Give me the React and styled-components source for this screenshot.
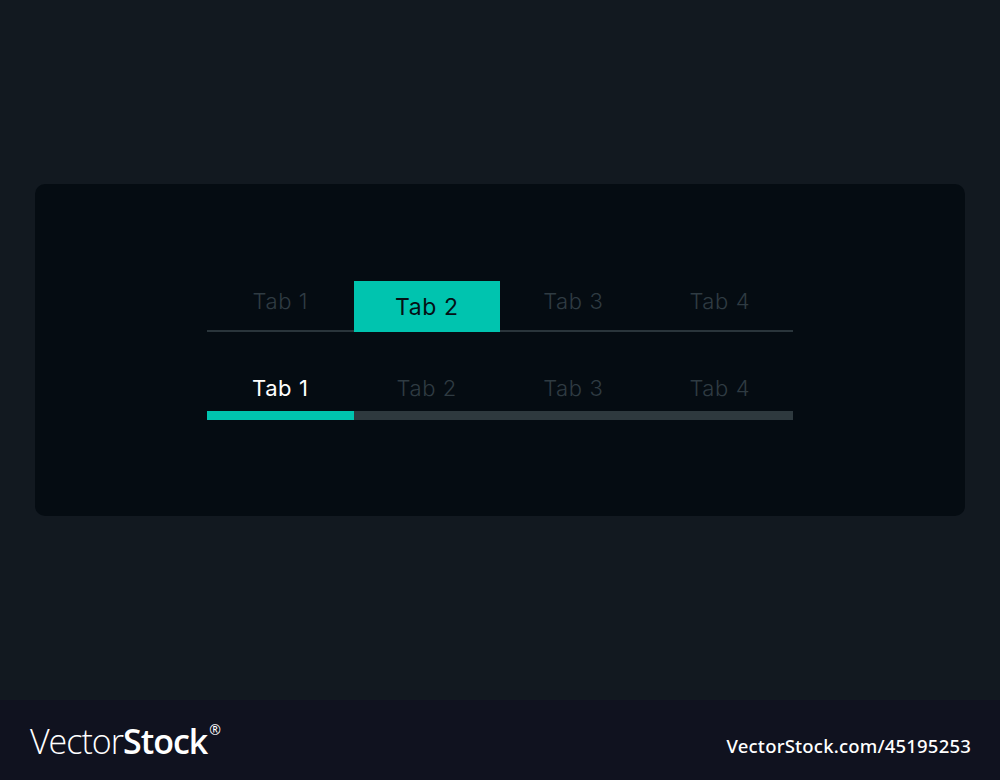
import React, { useState } from "react";
import styled, { createGlobalStyle } from "styled-components";

const Global = createGlobalStyle`
  html, body { margin: 0; padding: 0; }
  body {
    background: #121920;
    font-family: "Inter", "Noto Sans", sans-serif;
  }
`;

const Page = styled.div`
  width: 1000px;
  height: 780px;
  display: flex;
  flex-direction: column;
  background: #121920;
`;

const Stage = styled.div`
  flex: 1;
  padding: 184px 35px 0 35px;
`;

const Card = styled.div`
  height: 332px;
  background: #050c12;
  border-radius: 10px;
  display: flex;
  flex-direction: column;
  align-items: center;
  padding-top: 97px;
  box-sizing: border-box;
`;

const TabGroup = styled.div`
  width: 586px;
  display: grid;
  grid-template-columns: repeat(4, 1fr);
  align-items: end;
  border-bottom: 2px solid #2a353b;
`;

const BoxTab = styled.button`
  all: unset;
  height: 51px;
  display: flex;
  align-items: center;
  justify-content: center;
  font-size: ${(p) => (p.$active ? "23px" : "22px")};
  letter-spacing: 0.6px;
  font-weight: ${(p) => (p.$active ? 400 : 300)};
  color: ${(p) => (p.$active ? "#051015" : "#2f3b42")};
  background: ${(p) => (p.$active ? "#00c4af" : "transparent")};
  padding-bottom: ${(p) => (p.$active ? "0" : "11px")};
  box-sizing: border-box;
  margin-bottom: -2px;
  cursor: pointer;
`;

const LineGroup = styled.div`
  width: 586px;
  margin-top: 38px;
`;

const LineTabs = styled.div`
  display: grid;
  grid-template-columns: repeat(4, 1fr);
`;

const LineTab = styled.button`
  all: unset;
  height: 41px;
  display: flex;
  align-items: center;
  justify-content: center;
  font-size: 22px;
  letter-spacing: 0.6px;
  padding-bottom: 5px;
  box-sizing: border-box;
  font-weight: ${(p) => (p.$active ? 400 : 300)};
  color: ${(p) => (p.$active ? "#ffffff" : "#2f3b42")};
  cursor: pointer;
`;

const Track = styled.div`
  height: 9px;
  background: #2e393e;
  display: flex;
`;

const Thumb = styled.div`
  width: 25%;
  background: #00c4af;
`;

const Footer = styled.div`
  height: 80px;
  background: #10121f;
  display: flex;
  align-items: center;
  justify-content: space-between;
  padding: 0 29px 0 30px;
  color: #ffffff;
`;

const Logo = styled.div`
  font-family: "Open Sans", "Noto Sans", sans-serif;
  font-size: 34px;
  letter-spacing: -1px;
  display: flex;
  align-items: flex-start;
  margin-top: 2px;
`;

const Thin = styled.span`
  font-weight: 300;
`;

const Bold = styled.span`
  font-weight: 600;
`;

const Reg = styled.span`
  font-size: 14px;
  margin-left: 2px;
  margin-top: 2px;
  letter-spacing: 0;
`;

const Link = styled.div`
  font-family: "Noto Sans", sans-serif;
  font-size: 18.5px;
  font-weight: 500;
  letter-spacing: 0.2px;
  margin-top: 11px;
`;

const tabs = ["Tab 1", "Tab 2", "Tab 3", "Tab 4"];

export default function App() {
  const [boxActive, setBoxActive] = useState(1);
  const [lineActive, setLineActive] = useState(0);
  return (
    <>
      <Global />
      <Page>
        <Stage>
          <Card>
            <TabGroup>
              {tabs.map((t, i) => (
                <BoxTab key={t} $active={i === boxActive} onClick={() => setBoxActive(i)}>
                  {t}
                </BoxTab>
              ))}
            </TabGroup>
            <LineGroup>
              <LineTabs>
                {tabs.map((t, i) => (
                  <LineTab key={t} $active={i === lineActive} onClick={() => setLineActive(i)}>
                    {t}
                  </LineTab>
                ))}
              </LineTabs>
              <Track>
                <Thumb style={{ marginLeft: `${lineActive * 25}%` }} />
              </Track>
            </LineGroup>
          </Card>
        </Stage>
        <Footer>
          <Logo>
            <Thin>Vector</Thin>
            <Bold>Stock</Bold>
            <Reg>®</Reg>
          </Logo>
          <Link>VectorStock.com/45195253</Link>
        </Footer>
      </Page>
    </>
  );
}
